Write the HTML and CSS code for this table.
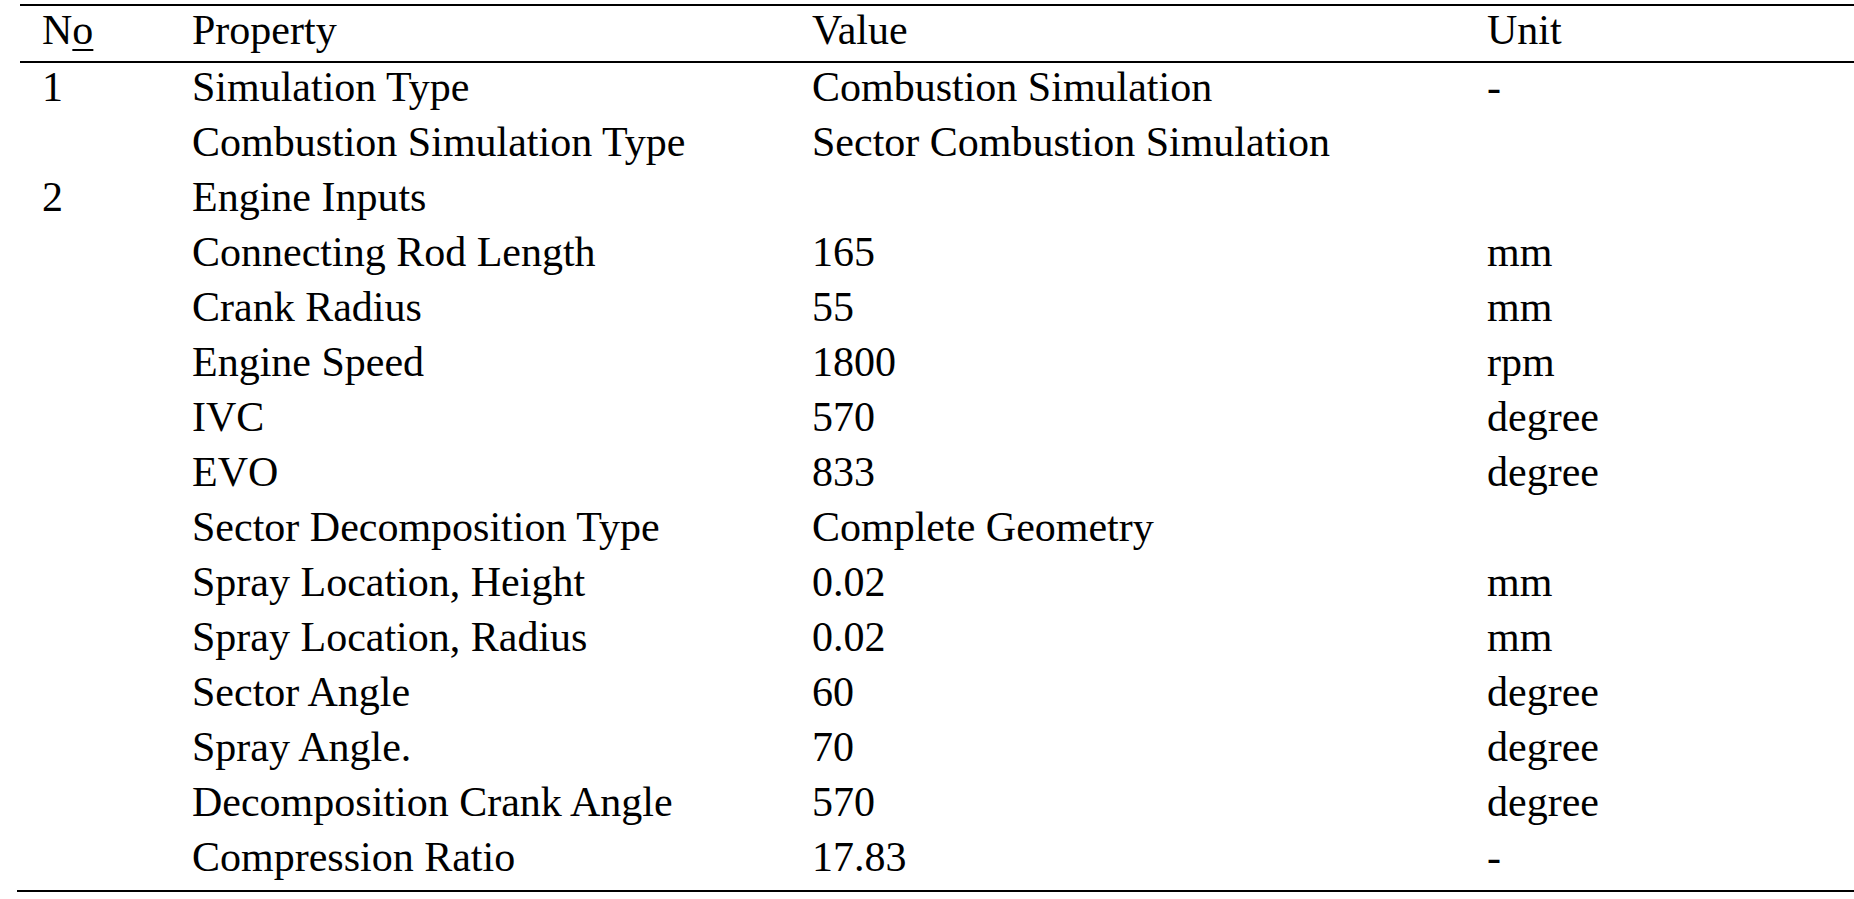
FILE: index.html
```html
<!DOCTYPE html>
<html>
<head>
<meta charset="utf-8">
<link rel="stylesheet" href="styles.css">
</head>
<body>
<div class="table">
  <div class="row head">
    <div>N<u>o</u></div><div>Property</div><div>Value</div><div>Unit</div>
  </div>
  <div class="body">
    <div class="row"><div>1</div><div>Simulation Type</div><div>Combustion Simulation</div><div>-</div></div>
    <div class="row"><div></div><div>Combustion Simulation Type</div><div>Sector Combustion Simulation</div><div></div></div>
    <div class="row"><div>2</div><div>Engine Inputs</div><div></div><div></div></div>
    <div class="row"><div></div><div>Connecting Rod Length</div><div>165</div><div>mm</div></div>
    <div class="row"><div></div><div>Crank Radius</div><div>55</div><div>mm</div></div>
    <div class="row"><div></div><div>Engine Speed</div><div>1800</div><div>rpm</div></div>
    <div class="row"><div></div><div>IVC</div><div>570</div><div>degree</div></div>
    <div class="row"><div></div><div>EVO</div><div>833</div><div>degree</div></div>
    <div class="row"><div></div><div>Sector Decomposition Type</div><div>Complete Geometry</div><div></div></div>
    <div class="row"><div></div><div>Spray Location, Height</div><div>0.02</div><div>mm</div></div>
    <div class="row"><div></div><div>Spray Location, Radius</div><div>0.02</div><div>mm</div></div>
    <div class="row"><div></div><div>Sector Angle</div><div>60</div><div>degree</div></div>
    <div class="row"><div></div><div>Spray Angle.</div><div>70</div><div>degree</div></div>
    <div class="row"><div></div><div>Decomposition Crank Angle</div><div>570</div><div>degree</div></div>
    <div class="row"><div></div><div>Compression Ratio</div><div>17.83</div><div>-</div></div>
  </div>
</div>
</body>
</html>
```
FILE: styles.css
```css
html, body {
  margin: 0;
  padding: 0;
  background: #fff;
}
body {
  font-family: "Liberation Serif", "Times New Roman", serif;
  font-size: 42px;
  color: #000;
  overflow: hidden;
}
.table {
  margin-top: 4px;
  margin-left: 20px;
  border-top: 2px solid #000;
}
.row {
  display: grid;
  grid-template-columns: 150px 620px 675px 1fr;
  padding-left: 22px;
  height: 55px;
  line-height: 46px;
  white-space: nowrap;
}
.head {
  padding-top: 1px;
  height: 54px;
  border-bottom: 2px solid #000;
}
.head u {
  text-decoration-thickness: 2px;
  text-underline-offset: 5px;
}
.body {
  padding-top: 1px;
  padding-bottom: 1px;
  border-bottom: 2px solid #000;
  margin-left: -3px;
  padding-left: 3px;
}
```
